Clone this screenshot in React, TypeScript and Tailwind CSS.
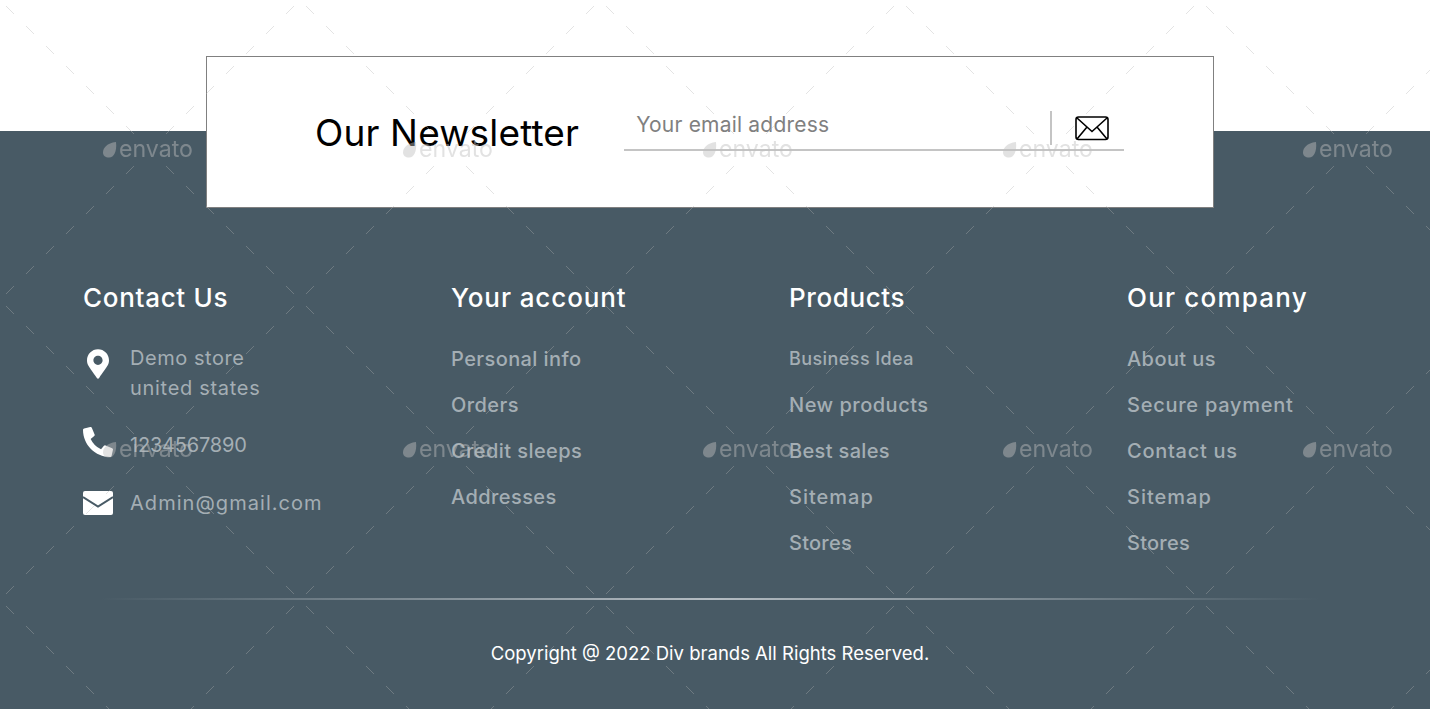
import React from "react";
import { FaMapMarkerAlt, FaPhoneAlt } from "react-icons/fa";

const font = "[font-family:Inter,'Liberation_Sans',sans-serif]";

const tracking: Record<string, string> = {
  "Secure payment": "tracking-[0.75px]",
  "Contact us": "tracking-[0.72px]",
  Sitemap: "tracking-[1px]",
  Stores: "tracking-[0.25px]",
  "New products": "tracking-[0.5px]",
  "Best sales": "tracking-[0.35px]",
};

function Watermark() {
  const dashes: React.ReactNode[] = [];
  for (let i = 0; i < 15; i++) {
    if (i === 7) continue;
    const a = 6 + i * 20;
    const b = a + 8;
    dashes.push(<line key={"d" + i} x1={a} y1={a} x2={b} y2={b} />);
    dashes.push(<line key={"u" + i} x1={a} y1={300 - a} x2={b} y2={300 - b} />);
  }
  return (
    <svg className="pointer-events-none absolute inset-0 z-20 h-full w-[1430px]" width="1430" height="709">
      <defs>
        <pattern id="wm" width="300" height="300" patternUnits="userSpaceOnUse">
          <g stroke="#b4b4b4" strokeOpacity="0.45" strokeWidth="0.8">{dashes}</g>
          <g fill="#bebebe" fillOpacity="0.45">
            <path d="M116 142c-9 1-13 6-13 10.500 0 3 2.500 5 6 5 5 0 8-6 7-15.500z" />
            <text x="119" y="157" fontFamily="Inter, sans-serif" fontSize="24" textLength="74" lengthAdjust="spacingAndGlyphs">envato</text>
          </g>
        </pattern>
      </defs>
      <rect width="1430" height="709" fill="url(#wm)" />
    </svg>
  );
}

function LinkCol({ title, titleClass, links, small }: { title: string; titleClass: string; links: string[]; small?: boolean }) {
  return (
    <div>
      <h3 className={"text-[26px] leading-[30px] font-medium text-white " + titleClass}>{title}</h3>
      <ul className="mt-[31px] flex flex-col">
        {links.map((l, i) => (
          <li
            key={l + i}
            className={
              "h-[46px] leading-[30px] font-medium text-[#a4aeb4] " +
              (tracking[l] ?? "tracking-[0.42px]") +
              " " +
              (small && i === 0 ? "text-[18px]" : "text-[20px]")
            }
          >
            {l}
          </li>
        ))}
      </ul>
    </div>
  );
}

export default function App() {
  return (
    <div className={"relative h-[709px] w-[1430px] overflow-hidden bg-white " + font}>
      <div className="flex h-[131px] justify-center pt-[56px] pr-[10px]">
        <div className="z-10 flex h-[152px] w-[1008px] shrink-0 border border-[#808080] bg-white">
          <h2 className="ml-[108px] mt-[54px] h-[44px] whitespace-nowrap text-[37px] leading-[44px] tracking-[0.15px] text-black">Our Newsletter</h2>
          <div className="relative ml-[45px] mt-[38px] h-[56px] w-[500px] border-b-2 border-[#c4c4c4]">
            <input
              placeholder="Your email address"
              className="h-[54px] w-[400px] bg-transparent pl-3 pt-[4px] text-[21px] tracking-[0.2px] outline-none placeholder:text-[#808080]"
            />
            <div className="absolute left-[426px] top-[16px] h-[34px] w-[2px] bg-[#c4c4c4]" />
            <svg className="absolute left-[451px] top-[21px]" width="35" height="25" viewBox="0 0 35 25" fill="none" stroke="#000" strokeWidth="1.6">
              <rect x="1" y="1" width="32" height="22.500" rx="2.500" />
              <path d="M2 2l15 13.500L32 2M2 23l10-12M32 23L22 11" />
            </svg>
          </div>
        </div>
      </div>
      <footer className="h-[578px] bg-[#485a65] pt-[152px]">
        <div className="ml-[83px] grid grid-cols-[368px_338px_338px_auto]">
          <div>
            <h3 className="text-[26px] leading-[30px] font-medium tracking-[0.7px] text-white">Contact Us</h3>
            <div className="mt-[30px] flex flex-col text-[20px] text-[#a4aeb4]">
              <div className="flex h-[67px]">
                <div className="flex w-[47px] pl-[4px] pt-[6px]"><FaMapMarkerAlt className="h-[30px] w-[22px] text-white" /></div>
                <div className="leading-[30px]">
                  <span className="tracking-[0.55px]">Demo store</span>
                  <br />
                  <span className="tracking-[0.7px]">united states</span>
                </div>
              </div>
              <div className="flex h-[60px] pt-[10px]">
                <div className="w-[47px] pt-[7px]"><FaPhoneAlt className="h-[30px] w-[30px] text-white" /></div>
                <div className="pt-[10px] leading-[30px] tracking-[-0.2px]">1234567890</div>
              </div>
              <div className="mt-[15px] flex">
                <div className="w-[47px] pt-[6px]">
                  <svg width="30" height="24" viewBox="0 0 30 24">
                    <rect width="30" height="24" rx="2" fill="#fff" />
                    <path d="M0 6l15 9.500L30 6" fill="none" stroke="#485a65" strokeWidth="2" />
                  </svg>
                </div>
                <div className="leading-[36px] tracking-[1.05px]">Admin@gmail.com</div>
              </div>
            </div>
          </div>
          <LinkCol title="Your account" titleClass="tracking-[0.9px]" links={["Personal info", "Orders", "Credit sleeps", "Addresses"]} />
          <LinkCol title="Products" titleClass="tracking-[0.6px]" small links={["Business Idea", "New products", "Best sales", "Sitemap", "Stores"]} />
          <LinkCol title="Our company" titleClass="tracking-[1.2px]" links={["About us", "Secure payment", "Contact us", "Sitemap", "Stores"]} />
        </div>
        <div className="mr-[110px] ml-[100px] mt-[24px] h-[2px] bg-[linear-gradient(90deg,transparent,#b4bcc2_50%,transparent)]" />
        <p className="mt-[39px] pr-[10px] text-center text-[18.5px] leading-[28px] text-white">Copyright @ 2022 Div brands All Rights Reserved.</p>
      </footer>
      <Watermark />
    </div>
  );
}
